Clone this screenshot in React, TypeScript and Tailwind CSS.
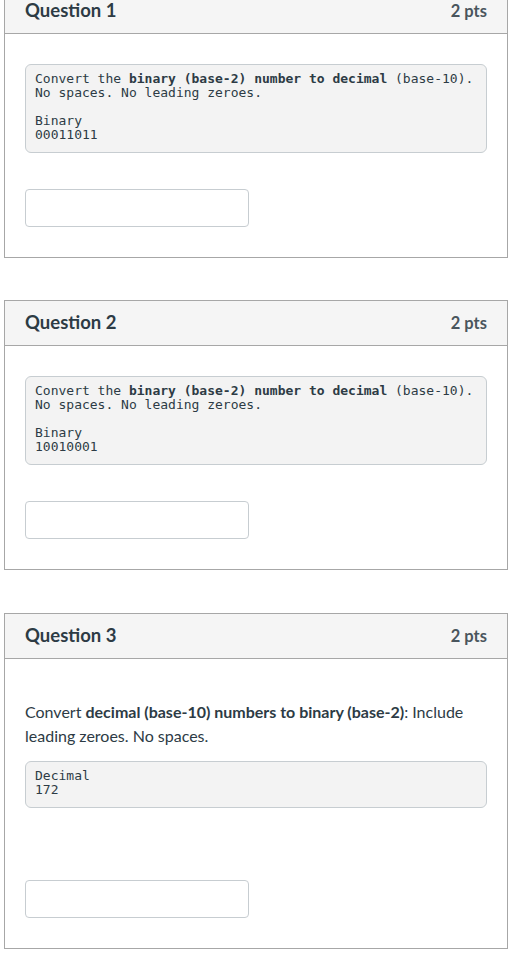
import React from "react"

type Q = {
  n: number
  pts: string
  intro?: React.ReactNode
  code: React.ReactNode
  gap: string
  top: string
}

const mono = "font-['DejaVu_Sans_Mono',monospace]"

function CodeBox({ children }: { children: React.ReactNode }) {
  return (
    <pre
      className={`${mono} m-0 whitespace-pre-wrap rounded-[6px] border border-[#c7cdd1] bg-[#f3f3f3] px-[9px] pt-[7px] pb-[10px] text-[13px] leading-[14px] text-[#2d3b45]`}
    >
      {children}
    </pre>
  )
}

function AnswerInput() {
  return (
    <input
      type="text"
      aria-label="answer"
      className="block h-[38px] w-[224px] rounded-[4px] border border-[#c7cdd1] bg-white px-2 outline-none"
    />
  )
}

function QuestionCard({ q }: { q: Q }) {
  return (
    <div className="w-[504px] border border-[#a7a7a7] bg-white" style={{ marginTop: q.top }}>
      <div className="flex h-[45px] items-center justify-between border-b border-[#a7a7a7] bg-[#f5f5f5] px-[20px] text-[#2d3b45]">
        <h2 className="text-[18.5px] font-bold">Question {q.n}</h2>
        <span className="text-[16.5px] font-bold text-[#4a555d]">{q.pts}</span>
      </div>
      <div className="px-[20px] pb-[30px]" style={{ paddingTop: q.intro ? 41 : 30 }}>
        {q.intro && (
          <p className="mb-[13px] text-[16px] leading-[24px] text-[#2d3b45]">{q.intro}</p>
        )}
        <CodeBox>{q.code}</CodeBox>
        <div style={{ height: q.gap }} />
        <AnswerInput />
      </div>
    </div>
  )
}

const binPrompt = (value: string) => (
  <>
    Convert the <b className="font-extrabold">binary (base-2) number to decimal</b> (base-10).
    {"\n"}No spaces. No leading zeroes.
    {"\n\n"}Binary
    {"\n"}
    {value}
  </>
)

const questions: Q[] = [
  { n: 1, pts: "2 pts", code: binPrompt("00011011"), gap: "36px", top: "-12px" },
  { n: 2, pts: "2 pts", code: binPrompt("10010001"), gap: "36px", top: "42px" },
  {
    n: 3,
    pts: "2 pts",
    intro: (
      <>
        Convert <b>decimal (base-10) numbers to binary (base-2)</b>: Include leading zeroes. No
        spaces.
      </>
    ),
    code: (
      <>
        Decimal
        {"\n"}172
      </>
    ),
    gap: "72px",
    top: "43px",
  },
]

export default function App() {
  return (
    <div className="min-h-screen bg-white font-['Lato',sans-serif]">
      <div className="flex flex-col pl-[4px] pb-[8px]">
        {questions.map((q) => (
          <QuestionCard key={q.n} q={q} />
        ))}
      </div>
    </div>
  )
}
